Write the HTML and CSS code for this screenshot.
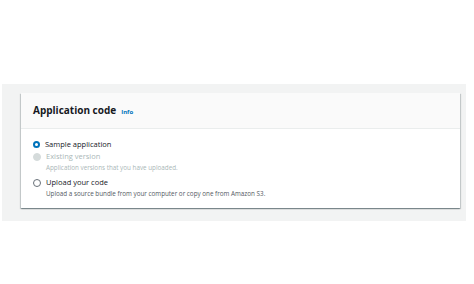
FILE: index.html
```html
<!DOCTYPE html>
<html>
<head>
    <title>Application code</title>
    <link rel="stylesheet" href="styles.css">
</head>
<body>
    <div class="band">
        <div class="panel">
            <div class="panel-header">
                <h2>Application code</h2>
                <span class="info-link">Info</span>
            </div>
            <div class="panel-body">
                <label class="option">
                    <span class="radio checked"></span>
                    <span class="option-text">
                        <span class="option-label">Sample application</span>
                    </span>
                </label>
                <label class="option disabled">
                    <span class="radio"></span>
                    <span class="option-text">
                        <span class="option-label">Existing version</span>
                        <span class="option-desc">Application versions that you have uploaded.</span>
                    </span>
                </label>
                <label class="option">
                    <span class="radio"></span>
                    <span class="option-text">
                        <span class="option-label">Upload your code</span>
                        <span class="option-desc">Upload a source bundle from your computer or copy one from Amazon S3.</span>
                    </span>
                </label>
            </div>
        </div>
    </div>
</body>
</html>
```

FILE: styles.css
```css
body {
    font-family: "Open Sans", "Liberation Sans", sans-serif;
    margin: 0;
    background-color: #ffffff;
    color: #16191f;
}
.band {
    margin: 84px 8px 0 2px;
    padding: 9px 6px 13px 19px;
    background-color: #f2f3f3;
}
.panel {
    background-color: #ffffff;
    box-shadow: 0 1px 1px rgba(0, 28, 36, 0.3), 1px 1px 1px rgba(0, 28, 36, 0.15), -1px 1px 1px rgba(0, 28, 36, 0.15);
}
.panel-header {
    display: flex;
    align-items: baseline;
    gap: 5px;
    height: 36px;
    padding: 0 12px;
    background-color: #fafafa;
    border-bottom: 1px solid #eaeded;
    box-sizing: border-box;
    line-height: 35px;
}
.panel-header h2 {
    margin: 0;
    font-size: 10px;
    font-weight: 700;
}
.info-link {
    font-size: 6px;
    font-weight: 700;
    color: #0073bb;
}
.panel-body {
    padding: 10px 12px 9px;
}
.option {
    display: flex;
    align-items: flex-start;
    gap: 5px;
    margin-bottom: 4px;
}
.option:first-child {
    margin-bottom: 1px;
}
.option:last-child {
    margin-bottom: 0;
}
.radio {
    width: 6px;
    height: 6px;
    margin-top: 2px;
    border: 1px solid #687078;
    border-radius: 50%;
    flex-shrink: 0;
}
.radio.checked {
    width: 3px;
    height: 3px;
    border: 2.5px solid #0073bb;
}
.option.disabled .radio {
    background-color: #d5dbdb;
    border-color: #d5dbdb;
}
.option-text {
    display: flex;
    flex-direction: column;
}
.option-label {
    font-size: 7.5px;
    line-height: 11px;
}
.option-desc {
    font-size: 6.3px;
    line-height: 11px;
    color: #545b64;
}
.option.disabled .option-label,
.option.disabled .option-desc {
    color: #aab7b8;
}
```
